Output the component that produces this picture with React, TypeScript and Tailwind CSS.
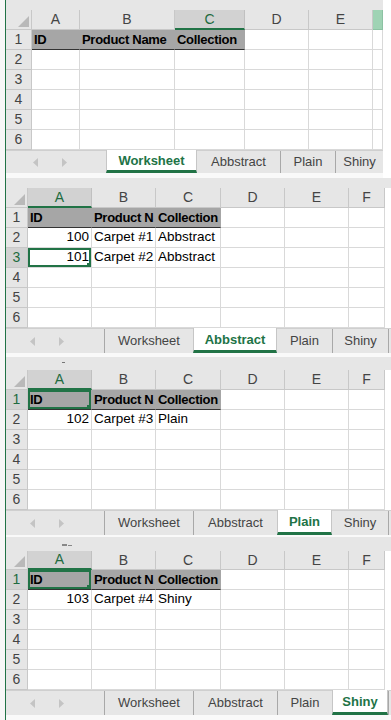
import React from 'react';

type Cell = { v: string; bold?: boolean; right?: boolean; fill?: boolean };

type SheetProps = {
  corner: number;
  cols: number[];
  letters: string[];
  gridW: number;
  topH: number;
  headH: number;
  tabH: number;
  bottomH: number;
  rows: Cell[][];
  selCol?: number;
  selRow?: number;
  sel?: [number, number];
  active: number;
  tabStart: number;
  tabW: number[];
  sliverCol?: number;
  mark?: 'one' | 'two';
};

const TABS = ['Worksheet', 'Abbstract', 'Plain', 'Shiny'];

function Arrow({ dir }: { dir: 'l' | 'r' }) {
  return (
    <svg width="6" height="9" viewBox="0 0 6 9">
      {dir === 'l' ? <path d="M5 0 L0 4.5 L5 9 Z" fill="#c4c4c4" /> : <path d="M1 0 L6 4.5 L1 9 Z" fill="#c4c4c4" />}
    </svg>
  );
}

function Sheet(p: SheetProps) {
  const rowNums = [1, 2, 3, 4, 5, 6];
  return (
    <div className="flex w-[391px] bg-white" style={{ fontFamily: '"Liberation Sans", Arial, sans-serif' }}>
      <div className="w-[5px] bg-[#f7f7f7]" />
      <div className="w-px bg-[#217346]" />
      <div className="flex flex-col">
        {/* top strip */}
        <div className="flex bg-[#e6e6e6] items-end" style={{ height: p.topH, width: p.gridW }}>
          {p.mark === 'one' && <div className="ml-[56px] mb-[7px] w-[3px] h-px bg-[#777]" />}
          {p.mark === 'two' && (
            <div className="ml-[56px] mb-[5px] flex items-center gap-[1px]">
              <div className="w-[5px] h-[2px] bg-[#888]" />
              <div className="w-[4px] h-px bg-[#888]" />
            </div>
          )}
        </div>
        {/* column headers */}
        <div className="flex" style={{ height: p.headH }}>
          <div className="relative bg-[#e6e6e6] border-r border-b border-[#c8c8c8]" style={{ width: p.corner }}>
            <svg className="absolute right-[2px] bottom-[2px]" width="11" height="11" viewBox="0 0 11 11">
              <path d="M11 0 L11 11 L0 11 Z" fill="#b9b9b9" />
            </svg>
          </div>
          {p.cols.map((w, i) => {
            const s = p.selCol === i;
            const sliver = p.sliverCol === i;
            return (
              <div
                key={i}
                className={`flex items-center justify-center text-[14px] border-r ${
                  s
                    ? 'bg-[#d2d2d2] text-[#1e6b3f] border-b-2 border-b-[#217346] border-r-[#c0c0c0]'
                    : sliver
                    ? 'bg-[#9fd3b4] border-b border-[#8cc2a3]'
                    : 'bg-[#e6e6e6] text-[#444] border-b border-[#c8c8c8]'
                }`}
                style={{ width: w }}
              >
                {p.letters[i]}
              </div>
            );
          })}
        </div>
        {/* rows */}
        {rowNums.map((n, ri) => {
          const rs = p.selRow === n;
          return (
            <div key={n} className="flex h-[20px]">
              <div
                className={`flex items-center justify-center text-[14px] border-r border-b border-[#c8c8c8] ${
                  rs ? 'bg-[#d2d2d2] text-[#1e6b3f]' : 'bg-[#e6e6e6] text-[#444]'
                }`}
                style={{ width: p.corner }}
              >
                {n}
              </div>
              {p.cols.map((w, ci) => {
                const c = p.rows[ri]?.[ci];
                const isSel = p.sel && p.sel[0] === n && p.sel[1] === ci;
                return (
                  <div
                    key={ci}
                    className={`relative flex items-center overflow-hidden pl-[2px] pr-[2px] text-black whitespace-nowrap border-r border-b ${
                      c?.fill ? 'bg-[#a6a6a6] border-r-[#a6a6a6] border-b-[#333]' : 'border-[#d9d9d9]'
                    } ${c?.right ? 'justify-end' : ''} ${
                      c?.bold ? 'font-bold text-[13px] tracking-[-0.3px]' : 'text-[13.5px]'
                    }`}
                    style={{ width: w }}
                  >
                    <span>{c?.v}</span>
                    {isSel && (
                      <>
                        <div className="absolute left-0 top-0 right-0 bottom-0 border-2 border-[#217346]" />
                        <div className="absolute right-0 bottom-0 w-[4px] h-[4px] bg-[#217346]" />
                      </>
                    )}
                  </div>
                );
              })}
            </div>
          );
        })}
        {/* tab bar */}
        <div className="flex bg-[#e6e6e6] border-t border-[#cfcfcf]" style={{ height: p.tabH, width: p.gridW }}>
          <div className="flex items-center" style={{ width: p.tabStart }}>
            <div style={{ marginLeft: p.tabStart === 100 ? 27 : 24 }}>
              <Arrow dir="l" />
            </div>
            <div className="ml-[22px]">
              <Arrow dir="r" />
            </div>
          </div>
          {TABS.map((t, i) => {
            const a = p.active === i;
            return (
              <div
                key={t}
                className={`flex items-center justify-center text-[13px] ${
                  a
                    ? 'bg-white text-[#217346] font-bold border-b-[3px] border-[#217346] -mt-px border-x border-x-[#c6c6c6]'
                    : 'text-[#444]'
                } ${!a && p.active !== i - 1 ? 'border-l border-l-[#a8a8a8]' : ''}`}
                style={{ width: p.tabW[i] }}
              >
                <span className={!a ? 'mb-[1px]' : 'mt-[2px]'}>{t}</span>
              </div>
            );
          })}
          {p.tabStart !== 100 && <div className="flex-1 border-l border-l-[#a8a8a8]" />}
        </div>
        <div className="bg-[#f9f9f9]" style={{ height: p.bottomH, width: p.gridW }} />
      </div>
    </div>
  );
}

const head = (b: string): Cell[] => [
  { v: 'ID', bold: true, fill: true },
  { v: b, bold: true, fill: true },
  { v: 'Collection', bold: true, fill: true },
];

const data = (id: string, name: string, col: string): Cell[] => [
  { v: id, right: true },
  { v: name },
  { v: col },
];

export default function App() {
  const cols2 = [64, 64, 65, 64, 64, 36];
  const letters2 = ['A', 'B', 'C', 'D', 'E', 'F'];
  const tabW2 = [89, 84, 55, 56];
  return (
    <div className="w-[391px] h-[720px] overflow-hidden bg-white">
      <Sheet
        corner={26}
        cols={[48, 95, 70, 64, 64, 10]}
        letters={['A', 'B', 'C', 'D', 'E', '']}
        gridW={377}
        topH={10}
        headH={20}
        tabH={23}
        bottomH={5}
        rows={[head('Product Name')]}
        selCol={2}
        sliverCol={5}
        active={0}
        tabStart={100}
        tabW={[91, 83, 55, 48]}
      />
      <Sheet
        corner={22}
        cols={cols2}
        letters={letters2}
        gridW={385}
        topH={10}
        headH={20}
        tabH={25}
        bottomH={4}
        rows={[head('Product N'), data('100', 'Carpet #1', 'Abbstract'), data('101', 'Carpet #2', 'Abbstract')]}
        selCol={0}
        selRow={3}
        sel={[3, 0]}
        active={1}
        tabStart={98}
        tabW={tabW2}
      />
      <Sheet
        corner={22}
        cols={cols2}
        letters={letters2}
        gridW={385}
        topH={13}
        headH={20}
        tabH={25}
        bottomH={2}
        rows={[head('Product N'), data('102', 'Carpet #3', 'Plain')]}
        selCol={0}
        selRow={1}
        sel={[1, 0]}
        active={2}
        tabStart={98}
        tabW={tabW2}
        mark="one"
      />
      <Sheet
        corner={22}
        cols={cols2}
        letters={letters2}
        gridW={385}
        topH={14}
        headH={19}
        tabH={25}
        bottomH={5}
        rows={[head('Product N'), data('103', 'Carpet #4', 'Shiny')]}
        selCol={0}
        selRow={1}
        sel={[1, 0]}
        active={3}
        tabStart={98}
        tabW={tabW2}
        mark="two"
      />
    </div>
  );
}
